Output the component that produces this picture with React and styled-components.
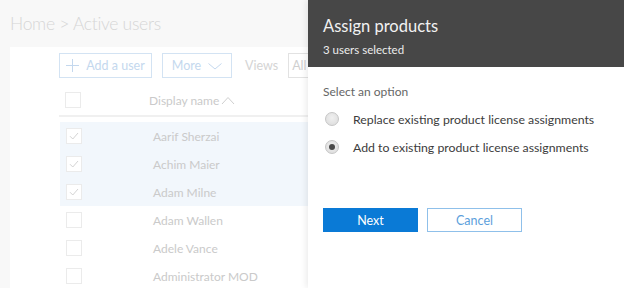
import React from "react";
import styled, { createGlobalStyle } from "styled-components";

const Global = createGlobalStyle`
  html, body { margin: 0; padding: 0; }
  body {
    width: 624px; height: 288px; overflow: hidden;
    background: #f8f8f8;
    font-family: "Lato", "Open Sans", "Liberation Sans", sans-serif;
  }
`;

const Page = styled.div`
  display: flex;
  width: 624px;
  height: 288px;
  overflow: hidden;
`;

const Main = styled.div`
  flex: 0 0 308px;
  overflow: hidden;
  display: flex;
  flex-direction: column;
  background: #f8f8f8;
`;

const Breadcrumb = styled.div`
  flex: 0 0 47px;
  padding-left: 10px;
  display: flex;
  align-items: center;
  font-size: 17.5px;
  font-weight: 300;
  letter-spacing: -0.3px;
  color: #d6d6d6;
  white-space: nowrap;
`;

const Card = styled.div`
  flex: 1 0 auto;
  margin-left: 10px;
  background: #ffffff;
  padding: 6px 0 0 49px;
`;

const Toolbar = styled.div`
  display: flex;
  align-items: center;
  height: 25px;
  white-space: nowrap;
`;

const ToolButton = styled.div`
  box-sizing: border-box;
  flex: 0 0 auto;
  height: 25px;
  width: ${(p) => p.$w}px;
  margin-right: ${(p) => p.$mr}px;
  border: 1px solid #d3e3f3;
  display: flex;
  align-items: center;
  justify-content: center;
  gap: 7px;
  color: #c4d8ee;
  font-size: 12.5px;
`;

const ViewsLabel = styled.span`
  flex: 0 0 auto;
  color: #d4d4d4;
  font-size: 12.5px;
  margin: 0 10px 0 0;
`;

const SelectBox = styled.div`
  box-sizing: border-box;
  flex: 0 0 auto;
  height: 25px;
  width: 60px;
  border: 1px solid #e2e2e2;
  padding-left: 3px;
  display: flex;
  align-items: center;
  color: #cfcfcf;
  font-size: 12.5px;
`;

const HeaderWrap = styled.div`
  margin-bottom: 5px;
`;

const HeaderRow = styled.div`
  display: flex;
  align-items: center;
  height: 30px;
  padding-top: 7px;
  border-bottom: 2px solid #f0f0f0;
`;

const Row = styled.div`
  display: flex;
  align-items: center;
  height: 28px;
  margin-left: 1px;
  background: ${(p) => (p.$selected ? "#f2f7fc" : "#ffffff")};
`;

const Check = styled.div`
  box-sizing: border-box;
  flex: 0 0 auto;
  width: 16px;
  height: 16px;
  border: 1px solid #ebebeb;
  margin-left: ${(p) => p.$ml}px;
  display: flex;
  align-items: center;
  justify-content: center;
  background: #fff;
`;

const NameCell = styled.div`
  margin-left: ${(p) => p.$ml}px;
  color: #cacaca;
  font-size: 12px;
  white-space: nowrap;
  display: flex;
  align-items: center;
  gap: 2px;
`;

const Panel = styled.div`
  flex: 0 0 316px;
  background: #ffffff;
  display: flex;
  flex-direction: column;
  box-shadow: -2px 0 6px rgba(0, 0, 0, 0.08);
  position: relative;
  z-index: 1;
`;

const PanelHeader = styled.div`
  flex: 0 0 67px;
  box-sizing: border-box;
  background: #474747;
  padding: 14px 0 0 15px;
  color: #f2f2f2;
`;

const PanelTitle = styled.div`
  font-size: 16.5px;
  line-height: 24px;
  font-weight: 400;
`;

const PanelSub = styled.div`
  font-size: 11.5px;
  margin-top: 5px;
  color: #ececec;
`;

const PanelBody = styled.div`
  padding: 17px 0 0 15px;
`;

const OptionLabel = styled.div`
  font-size: 12px;
  color: #666666;
  margin-bottom: 6px;
`;

const RadioRow = styled.div`
  display: flex;
  align-items: center;
  height: 28px;
`;

const Radio = styled.div`
  box-sizing: border-box;
  width: 14px;
  height: 14px;
  margin-left: 2px;
  border-radius: 50%;
  border: 1px solid #c6c6c6;
  background: radial-gradient(circle at 50% 40%, #f0f0f0, #dadada);
  display: flex;
  align-items: center;
  justify-content: center;
  &::after {
    content: "";
    display: ${(p) => (p.$checked ? "block" : "none")};
    width: 6px;
    height: 6px;
    border-radius: 50%;
    background: #4a4a4a;
  }
`;

const RadioText = styled.span`
  margin-left: 14px;
  font-size: 12.3px;
  color: #3c3c3c;
`;

const Buttons = styled.div`
  display: flex;
  gap: 9px;
  margin-top: 47px;
`;

const Button = styled.div`
  box-sizing: border-box;
  width: 95px;
  height: 24px;
  display: flex;
  align-items: center;
  justify-content: center;
  font-size: 12.5px;
  background: ${(p) => (p.$primary ? "#0a7ad6" : "#ffffff")};
  color: ${(p) => (p.$primary ? "#ffffff" : "#5d9fdc")};
  border: 1px solid ${(p) => (p.$primary ? "#0a7ad6" : "#8fc0ea")};
`;

const CheckMark = () => (
  <svg width="10" height="8" viewBox="0 0 10 8">
    <path d="M1 4.2 L3.8 7 L9 1" fill="none" stroke="#d4d4d4" strokeWidth="1" />
  </svg>
);

const users = [
  { name: "Aarif Sherzai", sel: true },
  { name: "Achim Maier", sel: true },
  { name: "Adam Milne", sel: true },
  { name: "Adam Wallen", sel: false },
  { name: "Adele Vance", sel: false },
  { name: "Administrator MOD", sel: false },
];

export default function App() {
  return (
    <>
      <Global />
      <Page>
        <Main>
          <Breadcrumb>Home &gt; Active users</Breadcrumb>
          <Card>
            <Toolbar>
              <ToolButton $w={93} $mr={10}>
                <svg width="13" height="13" viewBox="0 0 13 13">
                  <path d="M6.5 0 V13 M0 6.5 H13" stroke="#c4d8ee" strokeWidth="1" />
                </svg>
                Add a user
              </ToolButton>
              <ToolButton $w={70} $mr={13}>
                More
                <svg width="14" height="8" viewBox="0 0 14 8">
                  <path d="M0.5 1.5 L7 7 L13.5 1.5" fill="none" stroke="#c4d8ee" strokeWidth="1" />
                </svg>
              </ToolButton>
              <ViewsLabel>Views</ViewsLabel>
              <SelectBox>All</SelectBox>
            </Toolbar>
            <HeaderWrap>
              <HeaderRow>
                <Check $ml={6} />
                <NameCell $ml={68}>
                  Display name
                  <svg width="14" height="9" viewBox="0 0 14 9">
                    <path d="M1 8 L7 1.5 L13 8" fill="none" stroke="#cfcfcf" strokeWidth="1" />
                  </svg>
                </NameCell>
              </HeaderRow>
            </HeaderWrap>
            {users.map((u) => (
              <Row key={u.name} $selected={u.sel}>
                <Check $ml={6}>{u.sel && <CheckMark />}</Check>
                <NameCell $ml={71}>{u.name}</NameCell>
              </Row>
            ))}
          </Card>
        </Main>
        <Panel>
          <PanelHeader>
            <PanelTitle>Assign products</PanelTitle>
            <PanelSub>3 users selected</PanelSub>
          </PanelHeader>
          <PanelBody>
            <OptionLabel>Select an option</OptionLabel>
            <RadioRow>
              <Radio />
              <RadioText>Replace existing product license assignments</RadioText>
            </RadioRow>
            <RadioRow>
              <Radio $checked />
              <RadioText>Add to existing product license assignments</RadioText>
            </RadioRow>
            <Buttons>
              <Button $primary>Next</Button>
              <Button>Cancel</Button>
            </Buttons>
          </PanelBody>
        </Panel>
      </Page>
    </>
  );
}
